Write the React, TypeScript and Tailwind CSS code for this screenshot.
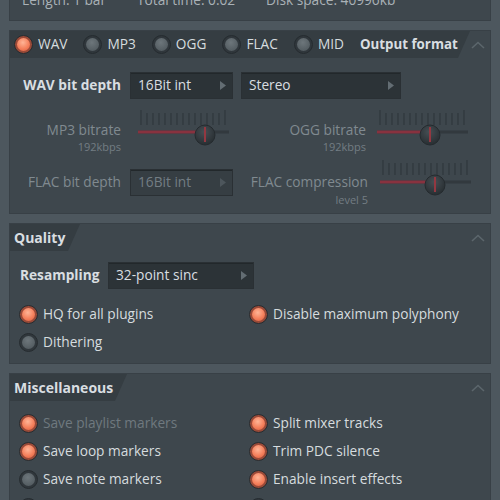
import type { ReactNode } from 'react'

const font = { fontFamily: '"Open Sans", "Noto Sans", sans-serif' }

function Radio({ on }: { on?: boolean }) {
  return (
    <span
      className={`flex h-[19px] w-[19px] shrink-0 items-center justify-center rounded-full border border-[#262c30] ${
        on ? 'bg-[#9a4a38]' : 'bg-[#30373c]'
      }`}
    >
      <span
        className={`h-[13px] w-[13px] rounded-full ${
          on
            ? 'bg-[radial-gradient(circle_at_45%_35%,#ffb496_0%,#f5805c_55%,#d75a3c_100%)]'
            : 'bg-[radial-gradient(circle_at_45%_35%,#6d767b_0%,#555e63_70%,#4a5257_100%)]'
        }`}
      />
    </span>
  )
}

function Option({ on, label, dim }: { on?: boolean; label: string; dim?: boolean }) {
  return (
    <div className="flex h-[28px] items-center gap-[5px]">
      <Radio on={on} />
      <span className={`whitespace-nowrap text-[13.7px] ${dim ? 'text-[#6f797f]' : 'text-[#d6dcdf]'}`}>
        {label}
      </span>
    </div>
  )
}

function Select({ text, w, dim }: { text: string; w: string; dim?: boolean }) {
  return (
    <div
      className={`flex h-[27px] items-center justify-between border border-[#2a3034] pl-[7px] pr-[6px] ${w} ${
        dim ? 'bg-[#363e43] text-[#737d83]' : 'bg-[#2c3337] text-[#d9dee1]'
      } shadow-[inset_0_1px_0_#22282b]`}
    >
      <span className="text-[13.7px]">{text}</span>
      <svg width="6" height="9" viewBox="0 0 6 9">
        <path d="M0 0 L6 4.5 L0 9 Z" fill={dim ? '#4d565c' : '#636d73'} />
      </svg>
    </div>
  )
}

function Slider({ knob }: { knob: number }) {
  const ticks = []
  for (let x = 5; x <= 89; x += 6) ticks.push(x)
  return (
    <svg width="95" height="42" viewBox="0 0 95 42" className="shrink-0 opacity-70">
      {ticks.map((x, i) => (
        <line
          key={x}
          x1={x}
          x2={x}
          y1={i === 0 || i === ticks.length - 1 ? 2 : 5}
          y2="17"
          stroke="#2b3236"
          strokeWidth="1.2"
        />
      ))}
      <line x1="2" x2="93" y1="24" y2="24" stroke="#2d3438" strokeWidth="3" />
      <line x1="2" x2={knob} y1="24" y2="24" stroke="#a82a3a" strokeWidth="3" />
      <defs>
        <radialGradient id="kn" cx="45%" cy="35%" r="65%">
          <stop offset="0%" stopColor="#4a5358" />
          <stop offset="100%" stopColor="#1f2427" />
        </radialGradient>
      </defs>
      <circle cx={knob} cy="27" r="10" fill="url(#kn)" stroke="#1b2023" />
      <line x1={knob} x2={knob} y1="19" y2="34" stroke="#b8323c" strokeWidth="2" />
    </svg>
  )
}

function Chevron() {
  return (
    <svg width="14" height="8" viewBox="0 0 14 8" className="mr-[5px]">
      <path d="M1 7 L7 1.5 L13 7" fill="none" stroke="#5c666c" strokeWidth="1.6" />
    </svg>
  )
}

function Panel({ h, children }: { h: string; children: ReactNode }) {
  return <div className={`${h} border border-[#384046] bg-[#3e474d]`}>{children}</div>
}

function Tab({ children, w }: { children: ReactNode; w: string }) {
  return (
    <div className="flex h-[27px] items-center justify-between">
      <div
        className={`flex h-full items-center bg-[#353d42] pl-[4px] ${w} [clip-path:polygon(0_0,100%_0,calc(100%-12px)_100%,0_100%)]`}
      >
        {children}
      </div>
      <Chevron />
    </div>
  )
}

export default function App() {
  return (
    <div
      className="flex h-[500px] w-[500px] flex-col gap-[9px] overflow-hidden bg-[#4d575e] px-[9px]"
      style={font}
    >
      {/* summary strip, cut off by the crop */}
      <div className="flex h-[21px] shrink-0 items-start overflow-hidden border-x border-b border-[#384046] bg-[#3e474d] pl-[12px] text-[13.7px] text-[#aab2b7]">
        <div className="-mt-[10px] flex whitespace-nowrap">
          <span className="w-[115px]">Length: 1 bar</span>
          <span className="w-[129px]">Total time: 0:02</span>
          <span>Disk space: 40996kb</span>
        </div>
      </div>

      {/* output format */}
      <Panel h="h-[184px] shrink-0">
        <Tab w="w-[460px]">
          <div className="flex items-center gap-[16px]">
            {['WAV', 'MP3', 'OGG', 'FLAC', 'MID'].map((f, i) => (
              <div key={f} className="flex items-center gap-[5px]">
                <Radio on={i === 0} />
                <span className="text-[13.7px] text-[#d6dcdf]">{f}</span>
              </div>
            ))}
            <span className="whitespace-nowrap text-[13.3px] font-bold text-[#d9dee1]">Output format</span>
          </div>
        </Tab>

        <div className="mt-[14px] flex items-center">
          <span className="w-[111px] whitespace-nowrap text-right text-[13.7px] font-bold text-[#d9dee1]">
            WAV bit depth
          </span>
          <div className="ml-[9px]">
            <Select text="16Bit int" w="w-[103px]" />
          </div>
          <div className="ml-[8px]">
            <Select text="Stereo" w="w-[160px]" />
          </div>
        </div>

        <div className="mt-[9px] flex items-start">
          <div className="mt-[12px] flex w-[111px] flex-col items-end">
            <span className="text-[13.7px] leading-[20px] text-[#808a90]">MP3 bitrate</span>
            <span className="text-[11px] leading-[14px] text-[#737d83]">192kbps</span>
          </div>
          <div className="ml-[15px]">
            <Slider knob={69} />
          </div>
          <div className="ml-[22px] mt-[12px] flex w-[113px] flex-col items-end">
            <span className="text-[13.7px] leading-[20px] text-[#808a90]">OGG bitrate</span>
            <span className="text-[11px] leading-[14px] text-[#737d83]">192kbps</span>
          </div>
          <div className="ml-[9px]">
            <Slider knob={55} />
          </div>
        </div>

        <div className="mt-[15px] flex items-start">
          <span className="mt-[3px] w-[111px] whitespace-nowrap text-right text-[13.7px] leading-[20px] text-[#808a90]">
            FLAC bit depth
          </span>
          <div className="ml-[9px]">
            <Select text="16Bit int" w="w-[103px]" dim />
          </div>
          <div className="ml-[8px] mt-[3px] flex w-[127px] flex-col items-end">
            <span className="whitespace-nowrap text-[13.7px] leading-[20px] text-[#808a90]">FLAC compression</span>
            <span className="text-[11px] leading-[16px] text-[#737d83]">level 5</span>
          </div>
          <div className="-mt-[11px] ml-[10px]">
            <Slider knob={57} />
          </div>
        </div>
      </Panel>

      {/* quality */}
      <Panel h="h-[141px] shrink-0">
        <Tab w="w-[70px]">
          <span className="text-[14px] font-bold text-[#d9dee1]">Quality</span>
        </Tab>
        <div className="ml-[10px] mt-[11px] flex items-center">
          <span className="w-[88px] text-[13.7px] font-bold text-[#d9dee1]">Resampling</span>
          <Select text="32-point sinc" w="w-[146px]" />
        </div>
        <div className="mt-[11px] grid grid-cols-[230px_1fr] pl-[9px]">
          <Option on label="HQ for all plugins" />
          <Option on label="Disable maximum polyphony" />
          <Option label="Dithering" />
        </div>
      </Panel>

      {/* miscellaneous */}
      <Panel h="flex-1">
        <Tab w="w-[117px]">
          <span className="text-[14px] font-bold text-[#d9dee1]">Miscellaneous</span>
        </Tab>
        <div className="mt-[8px] grid grid-cols-[230px_1fr] pl-[9px]">
          <Option on dim label="Save playlist markers" />
          <Option on label="Split mixer tracks" />
          <Option on label="Save loop markers" />
          <Option on label="Trim PDC silence" />
          <Option label="Save note markers" />
          <Option on label="Enable insert effects" />
          <Option label="Reset plugins on render" />
          <Option label="Make project beat" />
        </div>
      </Panel>
    </div>
  )
}
